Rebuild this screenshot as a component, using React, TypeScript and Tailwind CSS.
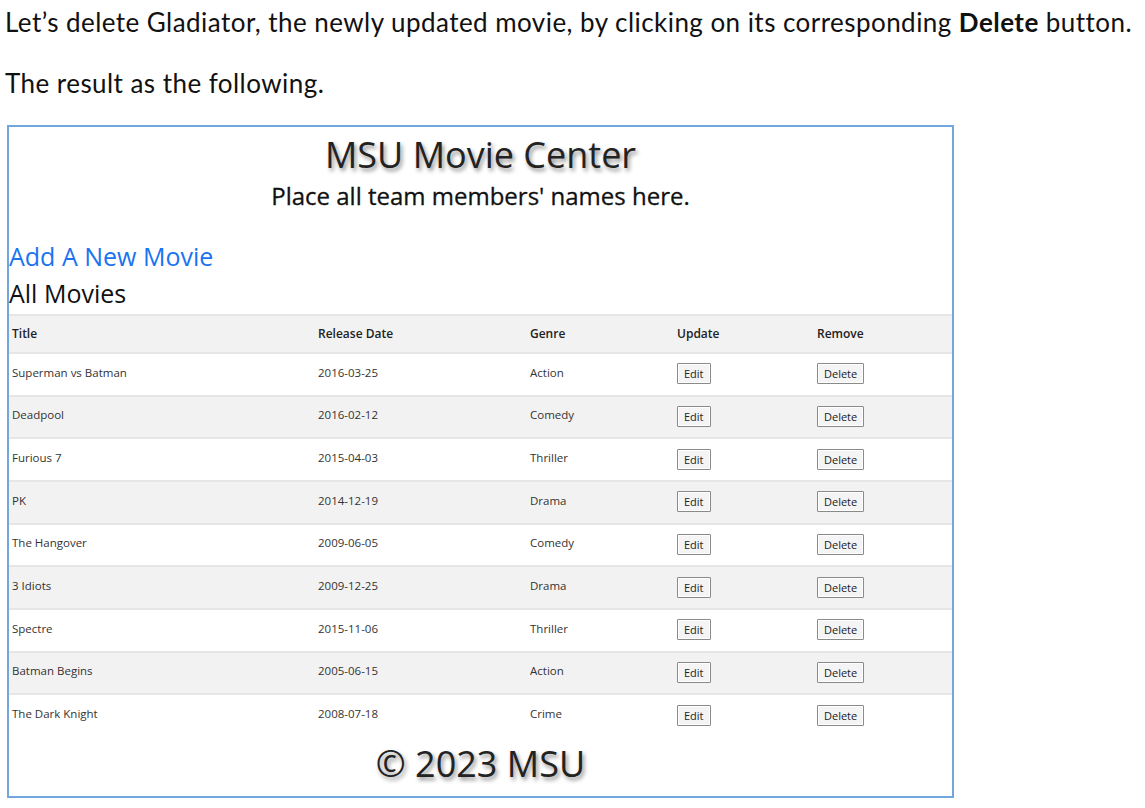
import React from "react";

const movies = [
  ["Superman vs Batman", "2016-03-25", "Action"],
  ["Deadpool", "2016-02-12", "Comedy"],
  ["Furious 7", "2015-04-03", "Thriller"],
  ["PK", "2014-12-19", "Drama"],
  ["The Hangover", "2009-06-05", "Comedy"],
  ["3 Idiots", "2009-12-25", "Drama"],
  ["Spectre", "2015-11-06", "Thriller"],
  ["Batman Begins", "2005-06-15", "Action"],
  ["The Dark Knight", "2008-07-18", "Crime"],
];

const cols = "grid grid-cols-[306px_212px_147px_140px_1fr]";

function Btn({ label }: { label: string }) {
  return (
    <button className="h-[21px] px-[6px] border border-[#8a8a8a] bg-[#f4f4f4] text-[11px] leading-[19px] text-[#222] rounded-[1px] shadow-[inset_0_0_0_1px_#fff]">
      {label}
    </button>
  );
}

export default function App() {
  return (
    <div className="w-[1145px] h-[808px] bg-white overflow-hidden text-black">
      <div className="font-['Lato','Liberation_Sans',sans-serif] text-[26px] leading-[32px] tracking-[0.45px] text-[#111]">
        <p className="pl-[5px] pt-[6px]">
          Let’s delete Gladiator, the newly updated movie, by clicking on its corresponding{" "}
          <b>Delete</b> button.
        </p>
        <p className="pl-[5px] mt-[29px]">The result as the following.</p>
      </div>

      <div className="mt-[26px] ml-[7px] w-[947px] h-[673px] border-2 border-[#72a7dd] font-['Open_Sans','Noto_Sans',sans-serif] text-[#222]">
        <h1 className="mt-[6px] text-center text-[36px] leading-[44px] [text-shadow:2px_3px_4px_rgba(0,0,0,0.45)]">
          MSU Movie Center
        </h1>
        <p className="mt-[4px] text-center text-[24px] leading-[30px] text-[#111] [-webkit-text-stroke:0.3px_#111]">
          Place all team members' names here.
        </p>
        <a className="block mt-[29px] text-[25px] leading-[32px] text-[#1a73f0]">Add A New Movie</a>
        <h2 className="mt-[5px] text-[25px] leading-[32px] text-[#111]">All Movies</h2>

        <div className="mt-[5px] text-[12px]">
          <div className={`${cols} h-[38px] items-center bg-[#f2f2f2] border-t-2 border-[#e6e6e6] font-semibold`}>
            <div className="pl-[3px]">Title</div>
            <div className="pl-[3px]">Release Date</div>
            <div className="pl-[3px]">Genre</div>
            <div className="pl-[3px]">Update</div>
            <div className="pl-[3px]">Remove</div>
          </div>
          {movies.map((m, i) => (
            <div
              key={m[0]}
              className={`${cols} h-[42.67px] items-center border-t-2 border-[#e6e6e6] text-[11.5px] text-[#333] ${
                i % 2 === 1 ? "bg-[#f2f2f2]" : "bg-white"
              }`}
            >
              <div className="pl-[3px] pb-[4px]">{m[0]}</div>
              <div className="pl-[3px] pb-[4px]">{m[1]}</div>
              <div className="pl-[3px] pb-[4px]">{m[2]}</div>
              <div className="pl-[3px] pb-[1px]">
                <Btn label="Edit" />
              </div>
              <div className="pl-[3px] pb-[1px]">
                <Btn label="Delete" />
              </div>
            </div>
          ))}
        </div>

        <p className="mt-[6px] text-center text-[36px] leading-[44px] [text-shadow:2px_3px_4px_rgba(0,0,0,0.45)]">
          © 2023 MSU
        </p>
      </div>
    </div>
  );
}
